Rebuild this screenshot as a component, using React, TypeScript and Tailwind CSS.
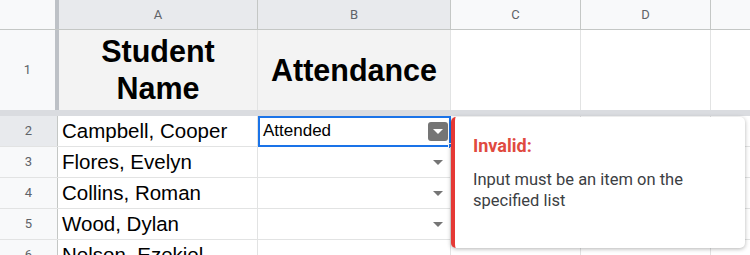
import React from "react";

const names = ["Campbell, Cooper", "Flores, Evelyn", "Collins, Roman", "Wood, Dylan", "Nelson, Ezekiel"];

function Tri({ className }: { className?: string }) {
  return (
    <svg width="10" height="6" viewBox="0 0 10 6" className={className}>
      <path d="M0 0 L10 0 L5 5 Z" fill="currentColor" />
    </svg>
  );
}

export default function App() {
  return (
    <div className="relative w-[750px] h-[255px] overflow-hidden bg-white font-['Liberation_Sans',Arial,sans-serif]">
      {/* header row */}
      <div className="flex h-[30px] bg-[#f8f9fa] border-b border-[#c4c7c5] text-[13px] text-[#5f6368] font-['Roboto',sans-serif]">
        <div className="w-[55px] border-r-[4px] border-[#bdc1c6] box-content" />
        <div className="w-[199px] flex items-center justify-center border-r border-[#c4c7c5] bg-[#e8eaed]">A</div>
        <div className="w-[193px] flex items-center justify-center border-r border-[#c4c7c5] bg-[#e8eaed]">B</div>
        <div className="w-[130px] flex items-center justify-center border-r border-[#c4c7c5]">C</div>
        <div className="w-[130px] flex items-center justify-center border-r border-[#c4c7c5]">D</div>
        <div className="flex-1" />
      </div>
      {/* row 1 */}
      <div className="flex h-[80px]">
        <div className="w-[55px] bg-[#f8f9fa] border-r-[4px] border-[#bdc1c6] box-content flex items-center justify-center text-[13px] text-[#5f6368] font-['Roboto',sans-serif]">1</div>
        <div className="w-[199px] bg-[#f3f3f3] border-r border-[#e2e3e3] flex items-center justify-center text-center font-bold text-[30.5px] leading-[37px] text-black">
          Student
          <br />
          Name
        </div>
        <div className="w-[193px] bg-[#f3f3f3] border-r border-[#e2e3e3] flex items-center justify-center font-bold text-[30.5px] text-black pt-[2px]">
          Attendance
        </div>
        <div className="w-[130px] border-r border-[#e2e3e3]" />
        <div className="w-[130px] border-r border-[#e2e3e3]" />
        <div className="flex-1" />
      </div>
      {/* frozen separator */}
      <div className="h-[6px] bg-[#dadce0]" />
      {/* data rows */}
      {names.map((n, i) => (
        <div key={n} className="flex h-[31px] border-b border-[#e2e3e3]">
          <div
            className={`w-[58px] border-r border-[#c4c7c5] flex items-center justify-center text-[13px] text-[#5f6368] font-['Roboto',sans-serif] ${
              i === 0 ? "bg-[#e8eaed]" : "bg-[#f8f9fa]"
            }`}
          >
            {i + 2}
          </div>
          <div className="w-[200px] border-r border-[#e2e3e3] flex items-center pl-[4px] text-[20.5px] text-black">{n}</div>
          <div className="relative w-[193px] border-r border-[#e2e3e3] flex items-center">
            {i === 0 ? (
              <>
                <div className="absolute left-0 top-0 w-[193px] h-[31px] border-2 border-[#1a73e8]" />
                <span className="pl-[5px] text-[17px] text-black">Attended</span>
                <div className="absolute left-[170px] top-[6px] w-[20px] h-[19px] rounded-[3px] bg-[#757575] flex items-center justify-center text-white">
                  <Tri />
                </div>
                <div className="absolute left-[190px] top-[27px] w-[6px] h-[6px] bg-[#1a73e8] border border-white" />
              </>
            ) : i < 4 ? (
              <div className="absolute left-[175px] top-[13px] text-[#757575]">
                <Tri />
              </div>
            ) : null}
          </div>
          <div className="w-[130px] border-r border-[#e2e3e3]" />
          <div className="w-[130px] border-r border-[#e2e3e3]" />
          <div className="flex-1" />
        </div>
      ))}
      {/* validation popup */}
      <div className="absolute left-[451px] top-[117px] w-[294px] h-[131px] bg-white rounded-[5px] border-l-[4px] border-[#e53935] shadow-[0_1px_4px_rgba(0,0,0,0.3)] pl-[18px] pt-[17px] font-['Roboto',sans-serif]">
        <div className="text-[18px] font-bold text-[#e04a3f] leading-[24px]">Invalid:</div>
        <div className="mt-[11px] text-[16.5px] leading-[21px] text-[#3c4043] w-[250px]">
          Input must be an item on the specified list
        </div>
      </div>
    </div>
  );
}
